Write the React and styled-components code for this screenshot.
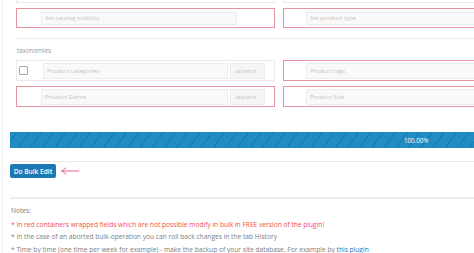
import styled, { createGlobalStyle } from "styled-components";

const Global = createGlobalStyle`
  html, body {
    margin: 0;
    padding: 0;
    background: #fff;
    overflow: hidden;
  }
  body {
    font-family: "Open Sans", "Liberation Sans", sans-serif;
  }
`;

const Page = styled.div`
  width: 474px;
  height: 253px;
  overflow: hidden;
  box-sizing: border-box;
  border-left: 1px solid #f1f1f1;
  margin-left: 2px;
  padding-left: 7px;
`;

const Fields = styled.div`
  padding-left: 6px;
  margin-top: -17px;
`;

const Grid = styled.div`
  display: grid;
  grid-template-columns: 259px 259px;
  gap: 8px;
  margin-bottom: ${(p) => p.$mb || 5}px;
`;

const Box = styled.div`
  box-sizing: border-box;
  height: ${(p) => p.$h || 20}px;
  border: 1px solid ${(p) => (p.$red ? "#e5949f" : "#ebebeb")};
  display: flex;
  align-items: center;
  padding-left: ${(p) => p.$pl || 24}px;
  padding-right: ${(p) => p.$pr || 0}px;
  gap: 2px;
`;

const Input = styled.div`
  box-sizing: border-box;
  height: ${(p) => p.$h || 13}px;
  width: ${(p) => p.$w || 190}px;
  flex: ${(p) => (p.$grow ? "1" : "none")};
  background: #f9f9f9;
  border: 1px solid #ececec;
  color: #c4c4c4;
  font-size: 6px;
  display: flex;
  align-items: center;
  padding-left: 3px;
  white-space: nowrap;
`;

const Append = styled.div`
  box-sizing: border-box;
  width: 35px;
  height: 16px;
  background: #f6f6f6;
  border: 1px solid #ececec;
  color: #c6c6c6;
  font-size: 6px;
  display: flex;
  align-items: center;
  padding-left: 4px;
`;

const Check = styled.div`
  box-sizing: border-box;
  width: 9px;
  height: 9px;
  border: 1px solid #a9a9a9;
  border-radius: 1px;
  margin-left: -22px;
  margin-right: 13px;
  background: #fff;
`;

const Separator = styled.div`
  height: 1px;
  background: #ececec;
`;

const Label = styled.div`
  font-size: 6.2px;
  color: #9a9a9a;
  height: 9px;
  line-height: 9px;
  margin: 7px 0 5px 1px;
`;

const Progress = styled.div`
  box-sizing: border-box;
  margin-top: 25px;
  height: 16px;
  width: 520px;
  background-color: #1f8cc3;
  background-image: repeating-linear-gradient(
    -55deg,
    transparent 0px,
    transparent 9px,
    rgba(10, 90, 140, 0.35) 9px,
    rgba(10, 90, 140, 0.35) 10px
  );
  display: flex;
  align-items: center;
  padding-left: 394px;
  color: #fff;
  font-size: 6.2px;
`;

const Rule = styled.div`
  height: ${(p) => p.$h || 1}px;
  background: ${(p) => p.$c || "#efeae0"};
  margin: ${(p) => p.$m || "0"};
`;

const Actions = styled.div`
  display: flex;
  align-items: center;
  gap: 5px;
  height: 14px;
  margin-top: 2px;
`;

const Button = styled.div`
  box-sizing: border-box;
  height: 14px;
  width: 46px;
  background: #1d78b6;
  border-radius: 2px;
  color: #fff;
  font-size: 6.6px;
  font-weight: 600;
  display: flex;
  align-items: center;
  justify-content: center;
  white-space: nowrap;
`;

const Notes = styled.div`
  padding-left: 1px;
  margin-top: 6px;
  font-size: 6.65px;
  color: #808080;
  line-height: 12.6px;
  white-space: nowrap;
`;

const NotesTitle = styled.div`
  margin-bottom: 1px;
`;

const Note = styled.div`
  color: ${(p) => (p.$red ? "#ef5050" : "#808080")};
`;

const Link = styled.a`
  color: #2a72b5;
  text-decoration: underline;
`;

function Arrow() {
  return (
    <svg width="19" height="8" viewBox="0 0 19 8">
      <path
        d="M1 4 H18 M1 4 L5 1 M1 4 L5 7"
        stroke="#e6557c"
        strokeWidth="0.9"
        fill="none"
        strokeLinecap="round"
      />
    </svg>
  );
}

export default function App() {
  return (
    <Page>
      <Global />
      <Fields>
        <Grid>
          <Box />
          <Box />
        </Grid>
        <Grid $mb={10}>
          <Box $red $pl={24}>
            <Input $w={196}>Set catalog visibility</Input>
          </Box>
          <Box $red $pl={22}>
            <Input $grow>Set product type</Input>
          </Box>
        </Grid>
        <Separator />
        <Label>taxonomies</Label>
        <Grid>
          <Box $h={21} $pr={9}>
            <Check />
            <Input $h={16} $grow>Product categories</Input>
            <Append>append</Append>
          </Box>
          <Box $h={21} $red $pl={22}>
            <Input $h={16} $grow>Product tags</Input>
          </Box>
        </Grid>
        <Grid $mb={0}>
          <Box $h={21} $red $pr={9}>
            <Input $h={16} $grow>Product Genre</Input>
            <Append>append</Append>
          </Box>
          <Box $h={21} $red $pl={22}>
            <Input $h={16} $grow>Product Size</Input>
          </Box>
        </Grid>
      </Fields>
      <Progress>100.00%</Progress>
      <Rule $m="13px 0 0 0" />
      <Actions>
        <Button>Do Bulk Edit</Button>
        <Arrow />
      </Actions>
      <Rule $h={2} $c="#eeeeee" $m="19px 0 0 0" />
      <Notes>
        <NotesTitle>Notes:</NotesTitle>
        <Note $red>
          * In red containers wrapped fields which are not possible modify in bulk in FREE version of the plugin!
        </Note>
        <Note>
          * In the case of an aborted bulk-operation you can roll back changes in the tab History
        </Note>
        <Note>
          * Time by time (one time per week for example) - make the backup of your site database. For example by{" "}
          <Link href="#">this plugin</Link>
        </Note>
      </Notes>
    </Page>
  );
}
